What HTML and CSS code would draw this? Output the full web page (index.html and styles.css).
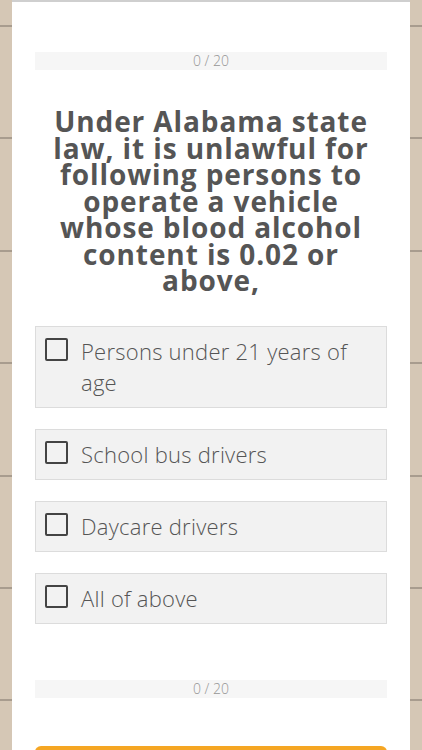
FILE: index.html
```html
<!DOCTYPE html>
<html>
<head>
<meta charset="utf-8">
<link rel="stylesheet" href="styles.css">
</head>
<body>
<div class="panel">
  <div class="progress">0 / 20</div>
  <h1 class="question">Under Alabama state<br>law, it is unlawful for<br>following persons to<br>operate a vehicle<br>whose blood alcohol<br>content is 0.02 or<br>above,</h1>
  <div class="options">
    <div class="option"><span class="box"></span><span class="label">Persons under 21 years of age</span></div>
    <div class="option"><span class="box"></span><span class="label">School bus drivers</span></div>
    <div class="option"><span class="box"></span><span class="label">Daycare drivers</span></div>
    <div class="option"><span class="box"></span><span class="label">All of above</span></div>
  </div>
  <div class="progress bottom">0 / 20</div>
  <div class="button"></div>
</div>
</body>
</html>
```
FILE: styles.css
```css
html, body {
  margin: 0;
  padding: 0;
  height: 750px;
  overflow: hidden;
}
body {
  background-color: #d5c7b5;
  background-image: repeating-linear-gradient(to bottom, transparent 0, transparent 25px, #a89c8e 25px, #a89c8e 27px, transparent 27px, transparent 112.4px);
}
.panel {
  margin: 0 12px;
  background: #fff;
  height: 750px;
  box-sizing: border-box;
  border-top: 2px solid #cfcfcf;
  padding: 50px 23px 0;
  display: flex;
  flex-direction: column;
}
.panel > * {
  flex: none;
}
.progress {
  height: 18px;
  line-height: 18px;
  background: #f6f6f6;
  color: #959595;
  text-align: center;
  font-family: "Open Sans", sans-serif;
  font-weight: 300;
  font-size: 14px;
}
.question {
  margin: 38px 0 0;
  text-align: center;
  color: #555;
  font-family: "Open Sans", sans-serif;
  font-weight: 700;
  font-size: 28px;
  letter-spacing: 0.9px;
  line-height: 26.5px;
  white-space: nowrap;
}
.options {
  margin-top: 32px;
  display: flex;
  flex-direction: column;
  gap: 21px;
}
.option {
  display: flex;
  align-items: flex-start;
  background: #f2f2f2;
  border: 1px solid #dcdcdc;
  padding: 9px 10px 9px 9px;
  font-family: "Open Sans", sans-serif;
  font-weight: 300;
  font-size: 22px;
  letter-spacing: 0.25px;
  line-height: 31px;
  color: #555;
}
.box {
  flex: none;
  width: 19px;
  height: 19px;
  border: 2px solid #444;
  border-radius: 2px;
  margin-top: 2px;
  margin-right: 13px;
}
.progress.bottom {
  margin-top: 56px;
}
.button {
  margin-top: 48px;
  height: 20px;
  background: #f5a623;
  border-radius: 6px 6px 0 0;
}
```
